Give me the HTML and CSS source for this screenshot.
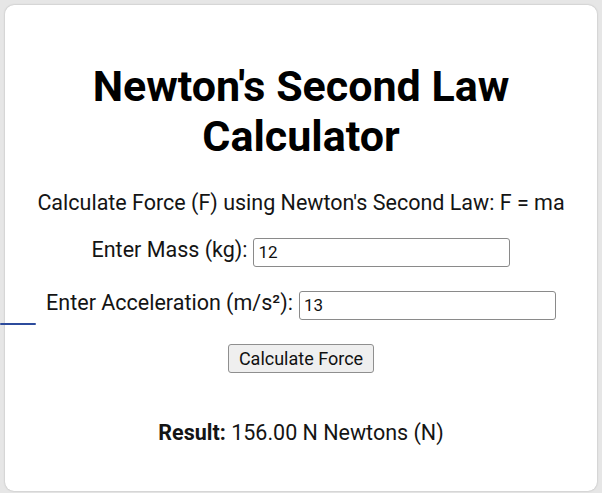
FILE: index.html
```html
<!DOCTYPE html>
<html lang="en">
<head>
<meta charset="utf-8">
<title>Newton's Second Law Calculator</title>
<link rel="stylesheet" href="styles.css">
</head>
<body>
<div class="card">
  <div class="content">
    <h1 class="title">Newton's Second Law Calculator</h1>
    <p class="subtitle">Calculate Force (F) using Newton's Second Law: F = ma</p>
    <div class="row row-mass">
      <label class="label" for="mass">Enter Mass (kg):</label>
      <input class="field" id="mass" type="text" value="12">
    </div>
    <div class="row row-acc">
      <label class="label" for="acc">Enter Acceleration (m/s²):</label>
      <input class="field" id="acc" type="text" value="13">
    </div>
    <button class="btn" type="button">Calculate Force</button>
    <p class="result"><strong>Result:</strong> 156.00 N Newtons (N)</p>
  </div>
</div>
<div class="mark"></div>
</body>
</html>
```
FILE: styles.css
```css
html, body {
  margin: 0;
  padding: 0;
}
body {
  background: #e6e6e6;
  font-family: Roboto, "Noto Sans", sans-serif;
  color: #141414;
  width: 602px;
  height: 493px;
  overflow: hidden;
  position: relative;
}
.card {
  margin: 5px 5px 0 5px;
  height: 486px;
  background: #fff;
  border-radius: 9px;
  box-shadow: 0 0 2px rgba(0, 0, 0, 0.25);
}
.content {
  display: flex;
  flex-direction: column;
  align-items: center;
  text-align: center;
}
.title {
  margin: 56px 0 0;
  font-size: 43px;
  line-height: 50px;
  font-weight: 700;
  color: #000;
}
.subtitle {
  margin: 29px 0 0;
  font-size: 21.5px;
  line-height: 26px;
  white-space: nowrap;
}
.row {
  display: flex;
  align-items: center;
  gap: 6px;
  font-size: 21.5px;
  line-height: 26px;
}
.row-mass {
  margin-top: 21px;
}
.row-acc {
  margin-top: 23px;
}
.label {
  white-space: nowrap;
  padding-bottom: 4px;
}
.field {
  box-sizing: border-box;
  width: 257px;
  height: 29px;
  margin: 0;
  padding: 2px 4px;
  border: 1px solid #8a8a8a;
  border-radius: 3px;
  font-family: Roboto, sans-serif;
  font-size: 17px;
  color: #111;
  background: #fff;
}
.btn {
  margin-top: 24px;
  box-sizing: border-box;
  height: 29px;
  padding: 0 10px;
  border: 1px solid #8f8f8f;
  border-radius: 3px;
  background: #efefef;
  font-family: Roboto, sans-serif;
  font-size: 18px;
  color: #111;
}
.result {
  margin: 47px 0 0;
  font-size: 21.5px;
  line-height: 26px;
}
.result strong {
  font-weight: 700;
}
.mark {
  position: absolute;
  left: 0;
  top: 323px;
  width: 36px;
  height: 2px;
  background: #2c4b9c;
  border-radius: 1px;
}
```
